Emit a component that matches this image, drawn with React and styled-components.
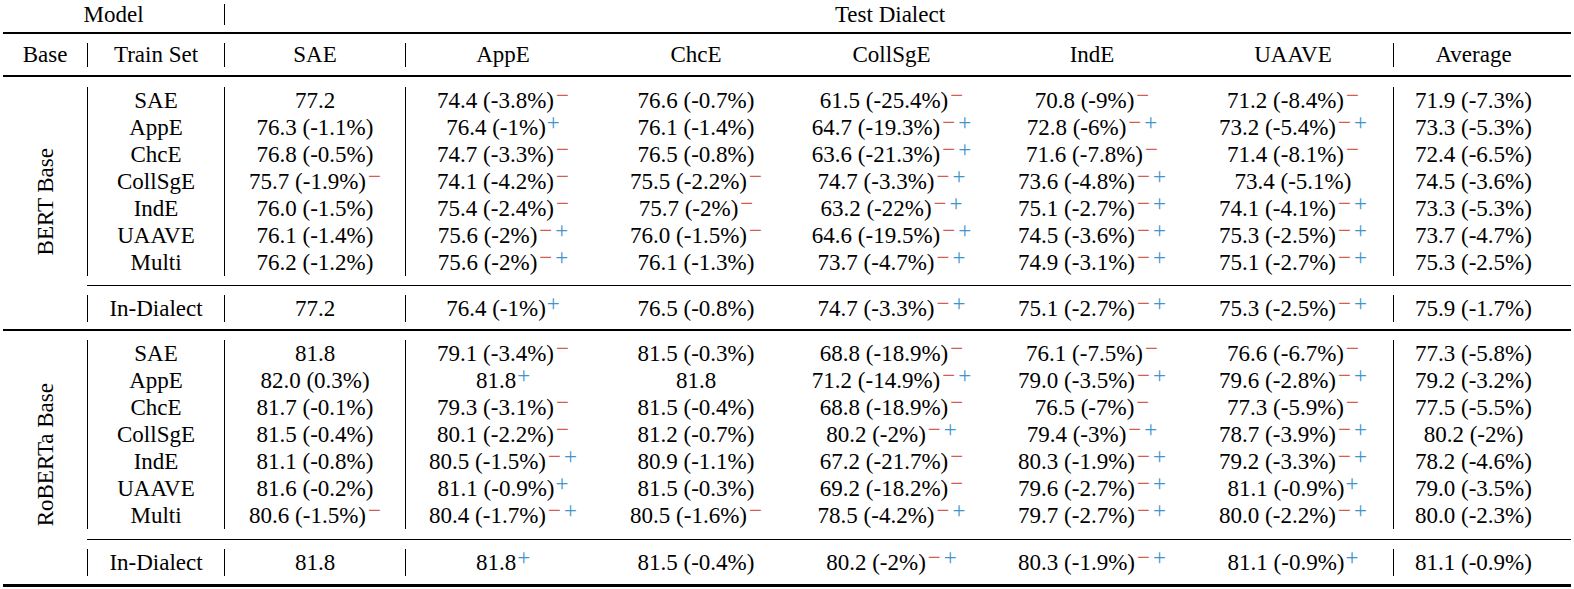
import React from 'react';
import styled, { createGlobalStyle } from 'styled-components';

const serif = '"Liberation Serif", "Times New Roman", "DejaVu Serif", serif';

const GlobalStyle = createGlobalStyle`
  html, body {
    margin: 0;
    padding: 0;
    background: #ffffff;
  }
  body {
    font-family: ${serif};
    color: #000000;
  }
`;

const Page = styled.div`
  width: 1574px;
  padding: 0 3px;
  box-sizing: border-box;
  font-family: ${serif};
`;

const Table = styled.table`
  border-collapse: separate;
  border-spacing: 0;
  table-layout: fixed;
  width: 1568px;
  font-family: ${serif};
  font-size: 23px;
  color: #000;
`;

const Col = styled.col`
  width: ${p => p.$w}px;
`;

const Cell = styled.td`
  padding: 0 ${p => p.$pr || 0}px 0 0;
  height: ${p => p.$h || 27}px;
  line-height: ${p => p.$h || 27}px;
  font-family: ${serif};
  font-size: 23px;
  text-align: center;
  white-space: nowrap;
  vertical-align: middle;
  border-left: ${p => (p.$bar ? '1px solid #000' : 'none')};
`;

const SpacerCell = styled.td`
  padding: 0;
  height: ${p => p.$h}px;
  font-size: 0;
  line-height: 0;
`;

const RuleCell = styled.td`
  padding: ${p => p.$at}px 0 0 0;
  height: ${p => p.$h}px;
  box-sizing: border-box;
  font-size: 0;
  line-height: 0;
  vertical-align: top;
`;

const Line = styled.div`
  height: ${p => p.$w}px;
  background: #000;
`;

const LabelCell = styled.td`
  padding: 0;
  text-align: center;
  vertical-align: middle;
`;

const SideLabel = styled.div`
  display: inline-block;
  writing-mode: vertical-rl;
  font-family: ${serif};
  font-size: 23px;
  line-height: 1;
  white-space: nowrap;
  transform: translateY(23px) rotate(180deg);
`;

const Mark = styled.span`
  font-family: ${serif};
  font-size: 23px;
  line-height: 0;
  vertical-align: 5px;
  margin-left: ${p => p.$gap}px;
  color: ${p => (p.$tone === 'minus' ? '#d45d52' : '#4193cc')};
`;

const widths = [84, 137, 181, 195, 192, 199, 202, 200, 178];
const dialects = ['SAE', 'AppE', 'ChcE', 'CollSgE', 'IndE', 'UAAVE'];

// each value: "text|marks" where marks is m (worse), p (better) or mp
const bert = [
  ['SAE', '77.2', '74.4 (-3.8%)|m', '76.6 (-0.7%)', '61.5 (-25.4%)|m', '70.8 (-9%)|m', '71.2 (-8.4%)|m', '71.9 (-7.3%)'],
  ['AppE', '76.3 (-1.1%)', '76.4 (-1%)|p', '76.1 (-1.4%)', '64.7 (-19.3%)|mp', '72.8 (-6%)|mp', '73.2 (-5.4%)|mp', '73.3 (-5.3%)'],
  ['ChcE', '76.8 (-0.5%)', '74.7 (-3.3%)|m', '76.5 (-0.8%)', '63.6 (-21.3%)|mp', '71.6 (-7.8%)|m', '71.4 (-8.1%)|m', '72.4 (-6.5%)'],
  ['CollSgE', '75.7 (-1.9%)|m', '74.1 (-4.2%)|m', '75.5 (-2.2%)|m', '74.7 (-3.3%)|mp', '73.6 (-4.8%)|mp', '73.4 (-5.1%)', '74.5 (-3.6%)'],
  ['IndE', '76.0 (-1.5%)', '75.4 (-2.4%)|m', '75.7 (-2%)|m', '63.2 (-22%)|mp', '75.1 (-2.7%)|mp', '74.1 (-4.1%)|mp', '73.3 (-5.3%)'],
  ['UAAVE', '76.1 (-1.4%)', '75.6 (-2%)|mp', '76.0 (-1.5%)|m', '64.6 (-19.5%)|mp', '74.5 (-3.6%)|mp', '75.3 (-2.5%)|mp', '73.7 (-4.7%)'],
  ['Multi', '76.2 (-1.2%)', '75.6 (-2%)|mp', '76.1 (-1.3%)', '73.7 (-4.7%)|mp', '74.9 (-3.1%)|mp', '75.1 (-2.7%)|mp', '75.3 (-2.5%)'],
];
const bertIn = ['In-Dialect', '77.2', '76.4 (-1%)|p', '76.5 (-0.8%)', '74.7 (-3.3%)|mp', '75.1 (-2.7%)|mp', '75.3 (-2.5%)|mp', '75.9 (-1.7%)'];

const roberta = [
  ['SAE', '81.8', '79.1 (-3.4%)|m', '81.5 (-0.3%)', '68.8 (-18.9%)|m', '76.1 (-7.5%)|m', '76.6 (-6.7%)|m', '77.3 (-5.8%)'],
  ['AppE', '82.0 (0.3%)', '81.8|p', '81.8', '71.2 (-14.9%)|mp', '79.0 (-3.5%)|mp', '79.6 (-2.8%)|mp', '79.2 (-3.2%)'],
  ['ChcE', '81.7 (-0.1%)', '79.3 (-3.1%)|m', '81.5 (-0.4%)', '68.8 (-18.9%)|m', '76.5 (-7%)|m', '77.3 (-5.9%)|m', '77.5 (-5.5%)'],
  ['CollSgE', '81.5 (-0.4%)', '80.1 (-2.2%)|m', '81.2 (-0.7%)', '80.2 (-2%)|mp', '79.4 (-3%)|mp', '78.7 (-3.9%)|mp', '80.2 (-2%)'],
  ['IndE', '81.1 (-0.8%)', '80.5 (-1.5%)|mp', '80.9 (-1.1%)', '67.2 (-21.7%)|m', '80.3 (-1.9%)|mp', '79.2 (-3.3%)|mp', '78.2 (-4.6%)'],
  ['UAAVE', '81.6 (-0.2%)', '81.1 (-0.9%)|p', '81.5 (-0.3%)', '69.2 (-18.2%)|m', '79.6 (-2.7%)|mp', '81.1 (-0.9%)|p', '79.0 (-3.5%)'],
  ['Multi', '80.6 (-1.5%)|m', '80.4 (-1.7%)|mp', '80.5 (-1.6%)|m', '78.5 (-4.2%)|mp', '79.7 (-2.7%)|mp', '80.0 (-2.2%)|mp', '80.0 (-2.3%)'],
];
const robertaIn = ['In-Dialect', '81.8', '81.8|p', '81.5 (-0.4%)', '80.2 (-2%)|mp', '80.3 (-1.9%)|mp', '81.1 (-0.9%)|p', '81.1 (-0.9%)'];

const Value = ({ raw }) => {
  const [text, marks = ''] = raw.split('|');
  const hasMinus = marks.includes('m');
  return (
    <>
      {text}
      {hasMinus && <Mark $tone="minus" $gap={2}>−</Mark>}
      {marks.includes('p') && <Mark $tone="plus" $gap={hasMinus ? 3 : 1}>+</Mark>}
    </>
  );
};

const Spacer = ({ h }) => (
  <tr>
    <SpacerCell colSpan={9} $h={h} />
  </tr>
);

const Rule = ({ h, at, w, partial }) => (
  <tr>
    {partial && <SpacerCell $h={h} />}
    <RuleCell colSpan={partial ? 8 : 9} $h={h} $at={at}>
      <Line $w={w} />
    </RuleCell>
  </tr>
);

const DataCells = ({ row }) => (
  <>
    <Cell $bar>{row[0]}</Cell>
    {row.slice(1, 8).map((v, i) => (
      <Cell key={i} $bar={i === 0 || i === 1 || i === 6} $pr={i === 6 ? 18 : 0}>
        <Value raw={v} />
      </Cell>
    ))}
  </>
);

const Block = ({ label, rows }) => (
  <>
    {rows.map((row, i) => (
      <tr key={row[0]}>
        {i === 0 && (
          <LabelCell rowSpan={rows.length}>
            <SideLabel>{label}</SideLabel>
          </LabelCell>
        )}
        <DataCells row={row} />
      </tr>
    ))}
  </>
);

const InDialectRow = ({ row }) => (
  <tr>
    <Cell />
    <DataCells row={row} />
  </tr>
);

export default function App() {
  return (
    <Page>
      <GlobalStyle />
      <Table>
        <colgroup>
          {widths.map((w, i) => (
            <Col key={i} $w={w} />
          ))}
        </colgroup>
        <tbody>
          <Spacer h={4} />
          <tr>
            <Cell colSpan={2} $h={21}>Model</Cell>
            <Cell colSpan={7} $h={21} $bar $pr={16}>Test Dialect</Cell>
          </tr>
          <Rule h={18} at={7} w={2} />
          <tr>
            <Cell $h={24}>Base</Cell>
            <Cell $h={24} $bar>Train Set</Cell>
            {dialects.map((d, i) => (
              <Cell key={d} $h={24} $bar={i < 2}>{d}</Cell>
            ))}
            <Cell $h={24} $bar $pr={18}>Average</Cell>
          </tr>
          <Rule h={20} at={8} w={2} />
          <Block label="BERT Base" rows={bert} />
          <Rule h={19} at={9} w={1} partial />
          <InDialectRow row={bertIn} />
          <Rule h={18} at={7} w={2} />
          <Block label="RoBERTa Base" rows={roberta} />
          <Rule h={20} at={10} w={1} partial />
          <InDialectRow row={robertaIn} />
          <Rule h={13} at={8} w={3} />
        </tbody>
      </Table>
    </Page>
  );
}
